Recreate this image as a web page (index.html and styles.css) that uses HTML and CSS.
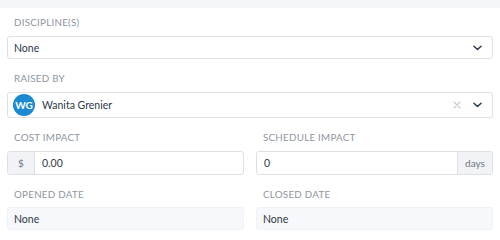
FILE: index.html
```html
<!DOCTYPE html>
<html>
<head>
<meta charset="utf-8">
<link rel="stylesheet" href="styles.css">
</head>
<body>
<div class="band"></div>
<div class="form">
  <div class="field">
    <div class="label">DISCIPLINE(S)</div>
    <div class="box select">
      <span class="value">None</span>
      <svg class="chev" width="9" height="6" viewBox="0 0 9 6"><path d="M1 1.2l3.5 3.3 3.5-3.3" fill="none" stroke="#2c3a4c" stroke-width="1.5" stroke-linecap="round" stroke-linejoin="round"/></svg>
    </div>
  </div>
  <div class="field">
    <div class="label">RAISED BY</div>
    <div class="box select person">
      <span class="avatar">WG</span>
      <span class="value">Wanita Grenier</span>
      <svg class="clear" width="8" height="8" viewBox="0 0 8 8"><path d="M1 1l6 6M7 1l-6 6" fill="none" stroke="#c3c8cf" stroke-width="1.1" stroke-linecap="round"/></svg>
      <svg class="chev" width="9" height="6" viewBox="0 0 9 6"><path d="M1 1.2l3.5 3.3 3.5-3.3" fill="none" stroke="#2c3a4c" stroke-width="1.5" stroke-linecap="round" stroke-linejoin="round"/></svg>
    </div>
  </div>
  <div class="row">
    <div class="field">
      <div class="label">COST IMPACT</div>
      <div class="box group">
        <span class="addon pre">$</span>
        <span class="value inp">0.00</span>
      </div>
    </div>
    <div class="field">
      <div class="label">SCHEDULE IMPACT</div>
      <div class="box group">
        <span class="value inp">0</span>
        <span class="addon post">days</span>
      </div>
    </div>
  </div>
  <div class="row">
    <div class="field last">
      <div class="label lbl-tight">OPENED DATE</div>
      <div class="box ro"><span class="value">None</span></div>
    </div>
    <div class="field last">
      <div class="label lbl-tight">CLOSED DATE</div>
      <div class="box ro"><span class="value">None</span></div>
    </div>
  </div>
</div>
</body>
</html>
```
FILE: styles.css
```css
html, body {
  margin: 0;
  padding: 0;
  background: #ffffff;
  font-family: Lato, "Open Sans", "Liberation Sans", sans-serif;
}
.band {
  height: 8px;
  background: #f5f6f8;
}
.form {
  padding: 8px 7px 0 7px;
}
.field {
  margin-bottom: 13px;
}
.field.last {
  margin-bottom: 0;
}
.row {
  display: grid;
  grid-template-columns: 1fr 1fr;
  column-gap: 12px;
}
.label {
  font-size: 9.8px;
  line-height: 12px;
  height: 12px;
  color: #8f95a0;
  padding-left: 7px;
  margin-bottom: 8px;
  letter-spacing: 0.25px;
}
.lbl-tight {
  margin-bottom: 7px;
}
.box {
  box-sizing: border-box;
  border: 1px solid #dde1e6;
  border-radius: 3px;
  display: flex;
  align-items: center;
  background: #fff;
}
.value {
  font-size: 10.5px;
  color: #2e3846;
}
.select {
  height: 23px;
  padding: 0 10px 0 6px;
}
.select .value {
  flex: 1;
}
.chev {
  display: block;
}
.person {
  height: 26px;
  padding-left: 5px;
}
.avatar {
  width: 22px;
  height: 22px;
  border-radius: 50%;
  background: #1b8ad3;
  color: #fff;
  font-size: 10px;
  font-weight: 700;
  display: flex;
  align-items: center;
  justify-content: center;
  margin-right: 7px;
}
.clear {
  display: block;
  margin-right: 12px;
}
.group {
  height: 24px;
  overflow: hidden;
}
.addon {
  align-self: stretch;
  display: flex;
  align-items: center;
  justify-content: center;
  background: #f1f3f6;
  color: #6f7782;
  font-size: 10px;
}
.addon.pre {
  width: 26px;
  border-right: 1px solid #dde1e6;
}
.addon.post {
  width: 34px;
  border-left: 1px solid #dde1e6;
}
.inp {
  flex: 1;
  padding-left: 7px;
}
.ro {
  height: 23px;
  background: #f6f8fb;
  border-color: #eff2f6;
  padding-left: 6px;
}
```
